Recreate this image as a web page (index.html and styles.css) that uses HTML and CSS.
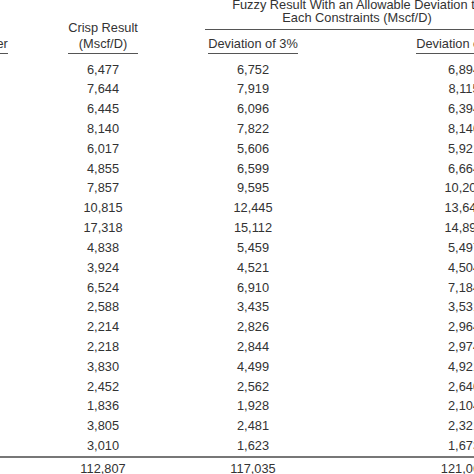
FILE: index.html
```html
<!DOCTYPE html>
<html lang="en">
<head>
<meta charset="utf-8">
<title>Crisp vs fuzzy results</title>
<link rel="stylesheet" href="styles.css">
</head>
<body>
<div class="sheet">
  <div class="head">
    <div class="cell h-well"><span class="lab">Well Number</span></div>
    <div class="cell h-crisp"><span class="lab">Crisp Result<br>(Mscf/D)</span></div>
    <div class="h-fuzzy"><div class="fuzzy-title">Fuzzy Result With an Allowable Deviation to<br>Each Constraints (Mscf/D)</div></div>
    <div class="cell h-d3"><span class="lab">Deviation of 3%</span></div>
    <div class="cell h-d5"><span class="lab">Deviation of 5%</span></div>
  </div>
  <div class="rows">
    <div>1</div><div>6,477</div><div>6,752</div><div>6,894</div>
    <div>2</div><div>7,644</div><div>7,919</div><div>8,115</div>
    <div>3</div><div>6,445</div><div>6,096</div><div>6,394</div>
    <div>4</div><div>8,140</div><div>7,822</div><div>8,140</div>
    <div>5</div><div>6,017</div><div>5,606</div><div>5,921</div>
    <div>6</div><div>4,855</div><div>6,599</div><div>6,664</div>
    <div>7</div><div>7,857</div><div>9,595</div><div>10,204</div>
    <div>8</div><div>10,815</div><div>12,445</div><div>13,645</div>
    <div>9</div><div>17,318</div><div>15,112</div><div>14,893</div>
    <div>10</div><div>4,838</div><div>5,459</div><div>5,497</div>
    <div>11</div><div>3,924</div><div>4,521</div><div>4,504</div>
    <div>12</div><div>6,524</div><div>6,910</div><div>7,184</div>
    <div>13</div><div>2,588</div><div>3,435</div><div>3,531</div>
    <div>14</div><div>2,214</div><div>2,826</div><div>2,964</div>
    <div>15</div><div>2,218</div><div>2,844</div><div>2,974</div>
    <div>16</div><div>3,830</div><div>4,499</div><div>4,921</div>
    <div>17</div><div>2,452</div><div>2,562</div><div>2,640</div>
    <div>18</div><div>1,836</div><div>1,928</div><div>2,104</div>
    <div>19</div><div>3,805</div><div>2,481</div><div>2,321</div>
    <div>20</div><div>3,010</div><div>1,623</div><div>1,673</div>
  </div>
  <div class="total">
    <div>Total</div><div>112,807</div><div>117,035</div><div>121,063</div>
  </div>
</div>
</body>
</html>
```
FILE: styles.css
```css
html, body {
  margin: 0;
  padding: 0;
  overflow: hidden;
  background: #ffffff;
}

body {
  font-family: "Liberation Sans", Arial, sans-serif;
  font-size: 12.8px;
  color: #333333;
}

.sheet {
  --cols: 142px 122px 178px 238px;
  margin-left: -100px;
  width: 680px;
}

.head {
  display: grid;
  grid-template-columns: var(--cols);
  grid-template-rows: 30px 24px;
}

.cell {
  display: flex;
  justify-content: center;
  align-items: flex-end;
  align-self: end;
  text-align: center;
}

.lab {
  display: block;
  line-height: 16px;
  padding-bottom: 1.5px;
  border-bottom: 1px solid #555555;
  white-space: nowrap;
}

.h-well { grid-column: 1; grid-row: 1 / 3; }
.h-crisp { grid-column: 2; grid-row: 1 / 3; }
.h-d3 { grid-column: 3; grid-row: 2; }
.h-d5 { grid-column: 4; grid-row: 2; }

.h-fuzzy {
  grid-column: 3 / 5;
  grid-row: 1;
  align-self: end;
}

.fuzzy-title {
  margin-left: 41px;
  width: 304px;
  text-align: center;
  line-height: 13px;
  padding-bottom: 5px;
  border-bottom: 1px solid #555555;
  white-space: nowrap;
}

.rows {
  display: grid;
  grid-template-columns: var(--cols);
  grid-auto-rows: 19.82px;
  padding-top: 5.6px;
  line-height: 19.82px;
  text-align: center;
}

.total {
  display: grid;
  grid-template-columns: var(--cols);
  border-top: 2px solid #777777;
  padding-top: 1.5px;
  line-height: 19.82px;
  text-align: center;
}

.rows > div:nth-child(4n),
.total > div:nth-child(4n) {
  padding-left: 6px;
}
```
